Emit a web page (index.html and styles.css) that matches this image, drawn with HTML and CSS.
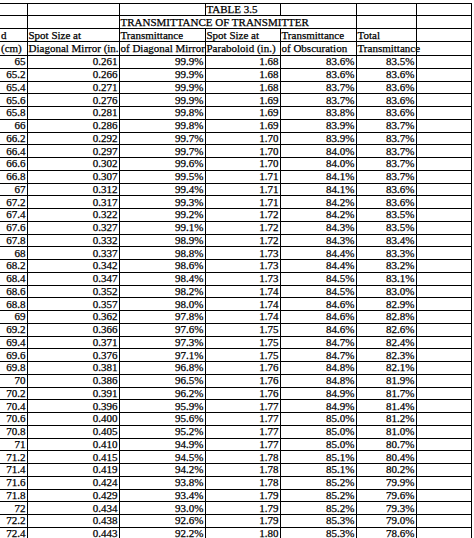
FILE: index.html
```html
<!DOCTYPE html>
<html>
<head>
<meta charset="utf-8">
<title>Table 3.5</title>
<link rel="stylesheet" href="styles.css">
</head>
<body>
<div class="sheet">
<table class="grid">
<colgroup>
<col class="c-a"><col class="c-b"><col class="c-c"><col class="c-d"><col class="c-e"><col class="c-f"><col class="c-g">
</colgroup>
<thead>
<tr class="h1"><td class="first"></td><td></td><td></td><td class="txt">TABLE 3.5</td><td></td><td></td><td></td></tr>
<tr class="h2"><td class="first"></td><td></td><td class="txt" colspan="3">TRANSMITTANCE OF TRANSMITTER</td><td></td><td></td></tr>
<tr class="h3"><td class="first txt">d</td><td class="txt">Spot Size at</td><td class="txt">Transmittance</td><td class="txt">Spot Size at</td><td class="txt">Transmittance</td><td class="txt">Total</td><td></td></tr>
<tr class="h4"><td class="first txt">(cm)</td><td class="txt">Diagonal Mirror (in.</td><td class="txt">of Diagonal Mirror</td><td class="txt">Paraboloid (in.)</td><td class="txt">of Obscuration</td><td class="txt over">Transmittance</td><td></td></tr>
</thead>
<tbody>
<tr><td class="first">65</td><td>0.261</td><td>99.9%</td><td>1.68</td><td>83.6%</td><td>83.5%</td><td></td></tr>
<tr><td class="first">65.2</td><td>0.266</td><td>99.9%</td><td>1.68</td><td>83.6%</td><td>83.6%</td><td></td></tr>
<tr><td class="first">65.4</td><td>0.271</td><td>99.9%</td><td>1.68</td><td>83.7%</td><td>83.6%</td><td></td></tr>
<tr><td class="first">65.6</td><td>0.276</td><td>99.9%</td><td>1.69</td><td>83.7%</td><td>83.6%</td><td></td></tr>
<tr><td class="first">65.8</td><td>0.281</td><td>99.8%</td><td>1.69</td><td>83.8%</td><td>83.6%</td><td></td></tr>
<tr><td class="first">66</td><td>0.286</td><td>99.8%</td><td>1.69</td><td>83.9%</td><td>83.7%</td><td></td></tr>
<tr><td class="first">66.2</td><td>0.292</td><td>99.7%</td><td>1.70</td><td>83.9%</td><td>83.7%</td><td></td></tr>
<tr><td class="first">66.4</td><td>0.297</td><td>99.7%</td><td>1.70</td><td>84.0%</td><td>83.7%</td><td></td></tr>
<tr><td class="first">66.6</td><td>0.302</td><td>99.6%</td><td>1.70</td><td>84.0%</td><td>83.7%</td><td></td></tr>
<tr><td class="first">66.8</td><td>0.307</td><td>99.5%</td><td>1.71</td><td>84.1%</td><td>83.7%</td><td></td></tr>
<tr><td class="first">67</td><td>0.312</td><td>99.4%</td><td>1.71</td><td>84.1%</td><td>83.6%</td><td></td></tr>
<tr><td class="first">67.2</td><td>0.317</td><td>99.3%</td><td>1.71</td><td>84.2%</td><td>83.6%</td><td></td></tr>
<tr><td class="first">67.4</td><td>0.322</td><td>99.2%</td><td>1.72</td><td>84.2%</td><td>83.5%</td><td></td></tr>
<tr><td class="first">67.6</td><td>0.327</td><td>99.1%</td><td>1.72</td><td>84.3%</td><td>83.5%</td><td></td></tr>
<tr><td class="first">67.8</td><td>0.332</td><td>98.9%</td><td>1.72</td><td>84.3%</td><td>83.4%</td><td></td></tr>
<tr><td class="first">68</td><td>0.337</td><td>98.8%</td><td>1.73</td><td>84.4%</td><td>83.3%</td><td></td></tr>
<tr><td class="first">68.2</td><td>0.342</td><td>98.6%</td><td>1.73</td><td>84.4%</td><td>83.2%</td><td></td></tr>
<tr><td class="first">68.4</td><td>0.347</td><td>98.4%</td><td>1.73</td><td>84.5%</td><td>83.1%</td><td></td></tr>
<tr><td class="first">68.6</td><td>0.352</td><td>98.2%</td><td>1.74</td><td>84.5%</td><td>83.0%</td><td></td></tr>
<tr><td class="first">68.8</td><td>0.357</td><td>98.0%</td><td>1.74</td><td>84.6%</td><td>82.9%</td><td></td></tr>
<tr><td class="first">69</td><td>0.362</td><td>97.8%</td><td>1.74</td><td>84.6%</td><td>82.8%</td><td></td></tr>
<tr><td class="first">69.2</td><td>0.366</td><td>97.6%</td><td>1.75</td><td>84.6%</td><td>82.6%</td><td></td></tr>
<tr><td class="first">69.4</td><td>0.371</td><td>97.3%</td><td>1.75</td><td>84.7%</td><td>82.4%</td><td></td></tr>
<tr><td class="first">69.6</td><td>0.376</td><td>97.1%</td><td>1.75</td><td>84.7%</td><td>82.3%</td><td></td></tr>
<tr><td class="first">69.8</td><td>0.381</td><td>96.8%</td><td>1.76</td><td>84.8%</td><td>82.1%</td><td></td></tr>
<tr><td class="first">70</td><td>0.386</td><td>96.5%</td><td>1.76</td><td>84.8%</td><td>81.9%</td><td></td></tr>
<tr><td class="first">70.2</td><td>0.391</td><td>96.2%</td><td>1.76</td><td>84.9%</td><td>81.7%</td><td></td></tr>
<tr><td class="first">70.4</td><td>0.396</td><td>95.9%</td><td>1.77</td><td>84.9%</td><td>81.4%</td><td></td></tr>
<tr><td class="first">70.6</td><td>0.400</td><td>95.6%</td><td>1.77</td><td>85.0%</td><td>81.2%</td><td></td></tr>
<tr><td class="first">70.8</td><td>0.405</td><td>95.2%</td><td>1.77</td><td>85.0%</td><td>81.0%</td><td></td></tr>
<tr><td class="first">71</td><td>0.410</td><td>94.9%</td><td>1.77</td><td>85.0%</td><td>80.7%</td><td></td></tr>
<tr><td class="first">71.2</td><td>0.415</td><td>94.5%</td><td>1.78</td><td>85.1%</td><td>80.4%</td><td></td></tr>
<tr><td class="first">71.4</td><td>0.419</td><td>94.2%</td><td>1.78</td><td>85.1%</td><td>80.2%</td><td></td></tr>
<tr><td class="first">71.6</td><td>0.424</td><td>93.8%</td><td>1.78</td><td>85.2%</td><td>79.9%</td><td></td></tr>
<tr><td class="first">71.8</td><td>0.429</td><td>93.4%</td><td>1.79</td><td>85.2%</td><td>79.6%</td><td></td></tr>
<tr><td class="first">72</td><td>0.434</td><td>93.0%</td><td>1.79</td><td>85.2%</td><td>79.3%</td><td></td></tr>
<tr><td class="first">72.2</td><td>0.438</td><td>92.6%</td><td>1.79</td><td>85.3%</td><td>79.0%</td><td></td></tr>
<tr><td class="first">72.4</td><td>0.443</td><td>92.2%</td><td>1.80</td><td>85.3%</td><td>78.6%</td><td></td></tr>
</tbody>
</table>
</div>
</body>
</html>
```
FILE: styles.css
```css
html, body {
  margin: 0;
  padding: 0;
  background: #fff;
}
.sheet {
  width: 474px;
  height: 538px;
  overflow: hidden;
  padding-top: 3px;
  box-sizing: border-box;
}
.grid {
  border-collapse: collapse;
  table-layout: fixed;
  width: 471px;
  font-family: "Liberation Serif", "Times New Roman", serif;
  font-size: 11px;
  color: #000;
  -webkit-text-stroke: 0.25px #000;
}
.c-a { width: 27px; }
.c-b { width: 92px; }
.c-c { width: 86px; }
.c-d { width: 75px; }
.c-e { width: 76px; }
.c-f { width: 60px; }
.c-g { width: 55px; }
.grid td {
  border: 1px solid #000;
  padding: 0 1px 0 1px;
  text-align: right;
  white-space: nowrap;
  overflow: hidden;
  line-height: 11px;
  vertical-align: middle;
}
.grid td.first {
  border-left: none;
}
.grid td.txt {
  text-align: left;
}
.grid td.over {
  overflow: visible;
}
.h1 { height: 12px; }
.h2 { height: 13px; }
.h3 { height: 13px; }
.h4 { height: 14px; }
tbody tr { height: 12.75px; }
```
